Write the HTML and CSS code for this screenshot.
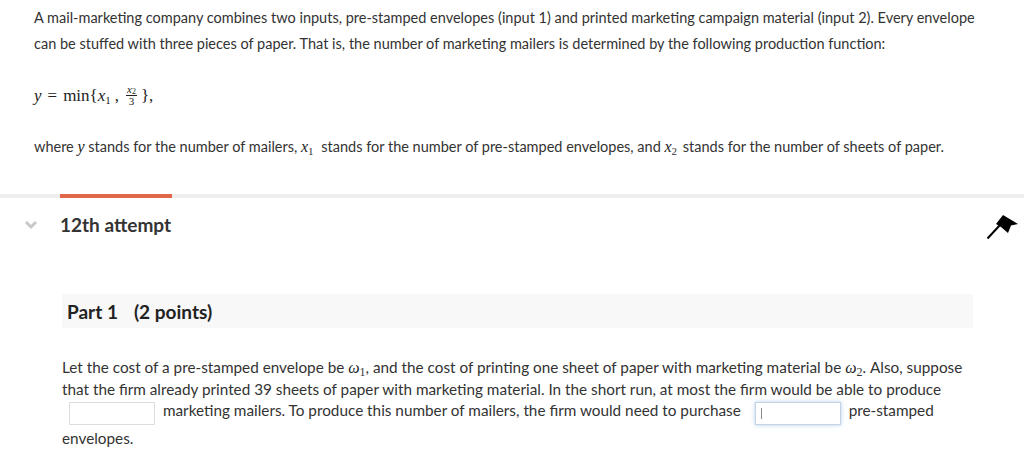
FILE: index.html
```html
<!DOCTYPE html>
<html>
<head>
<meta charset="utf-8">
<link rel="stylesheet" href="styles.css">
</head>
<body>
<div class="intro">
  <p class="p1">A mail-marketing company combines two inputs, pre-stamped envelopes (input 1) and printed marketing campaign material (input 2). Every envelope can be stuffed with three pieces of paper. That is, the number of marketing mailers is determined by the following production function:</p>
  <p class="formula"><span class="m">y</span><span class="eq">=</span><span class="mr">min{</span><span class="m">x</span><sub class="sb">1</sub><span class="mr">,</span><span class="frac"><span class="num"><span class="m">x</span><sub>2</sub></span><span class="den">3</span></span><span class="mr">},</span></p>
  <p class="p2">where <span class="m">y</span> stands for the number of mailers, <span class="m">x</span><sub class="sb">1</sub> stands for the number of pre-stamped envelopes, and <span class="m">x</span><sub class="sb2">2</sub> stands for the number of sheets of paper.</p>
</div>
<div class="tabbar"><div class="tab"></div></div>
<div class="attempt">
  <svg class="chev" width="14" height="10" viewBox="0 0 14 10"><path d="M2 2 L7 7 L12 2" fill="none" stroke="#c8c8c8" stroke-width="3"/></svg>
  <h2 class="title">12th attempt</h2>
  <svg class="flag" width="34" height="28" viewBox="0 0 34 28"><path d="M1.5 26.5 L14 13" stroke="#000" stroke-width="2" fill="none"/><path d="M10 12 L17 3 L32 12 L25 13.5 L22 21 L15 15 Z" fill="#000"/></svg>
</div>
<div class="part">
  <div class="parthead"><span class="pn">Part 1</span><span class="pp">(2 points)</span></div>
  <p class="q">Let the cost of a pre-stamped envelope be <span class="m">ω</span><sub class="sw">1</sub>, and the cost of printing one sheet of paper with marketing material be <span class="m">ω</span><sub class="sw">2</sub>. Also, suppose that the firm already printed 39 sheets of paper with marketing material. In the short run, at most the firm would be able to produce <span class="box"></span> marketing mailers. To produce this number of mailers, the firm would need to purchase <span class="box focus"><span class="caret"></span></span> pre-stamped envelopes.</p>
</div>
</body>
</html>
```
FILE: styles.css
```css
html, body { margin: 0; padding: 0; background: #fff; }
body { font-family: Lato, "Open Sans", sans-serif; color: #333; }
.intro { padding: 0 40px 0 34px; }
.p1 { margin: 5px 0 0; font-size: 14.5px; line-height: 26px; }
.formula { margin: 26px 0 0; font-family: "Liberation Serif", "DejaVu Serif", serif; font-size: 17px; line-height: 26px; color: #222; }
.m { font-family: "Liberation Serif", "DejaVu Serif", serif; font-style: italic; font-size: 17px; color: #222; }
.mr { font-family: "Liberation Serif", serif; }
.eq { margin: 0 6px 0 6px; }
sub { font-family: "Liberation Serif", serif; font-size: 11px; line-height: 0; vertical-align: -3px; }
.sb { margin-right: 4px; }
.sb2 { margin-right: 2px; }
.frac { display: inline-flex; flex-direction: column; align-items: center; vertical-align: middle; font-size: 10px; line-height: 10px; margin: 0 4px 0 7px; position: relative; top: -2px; }
.frac .num { border-bottom: 1px solid #222; padding: 0 1px; }
.frac .num .m { font-size: 11px; }
.frac sub { font-size: 8px; vertical-align: -1px; }
.frac .den { font-size: 11px; }
.p2 { margin: 25px 0 0; font-size: 14.5px; line-height: 26px; }
.p2 .m { font-size: 16px; }
.tabbar { margin-top: 34px; height: 4px; background: #eeeeee; padding-left: 60px; }
.tab { width: 112px; height: 4px; background: #e0674a; }
.attempt { display: flex; align-items: center; height: 52px; padding: 0 4px 0 24px; margin-top: 0; }
.chev { margin-right: 22px; margin-top: 2px; }
.title { margin: 0; font-size: 19px; font-weight: 700; color: #333; flex: 1; }
.flag { margin-top: 4px; }
.part { margin: 44px 51px 0 62px; }
.parthead { background: #f8f8f8; height: 34px; display: flex; align-items: center; padding-left: 5px; font-size: 19px; font-weight: 700; color: #222; }
.pp { margin-left: 16px; }
.q { margin: 29px 0 0; font-size: 15.3px; line-height: 21.5px; color: #333; }
.q .m { font-size: 16px; }
.sw { font-size: 12px; }
.box { display: inline-block; width: 84px; height: 21px; border: 1px solid #ddd; vertical-align: -12px; margin: 0 4px 3px 7px; position: relative; background: #fff; }
.box.focus { border-color: #c5d3e3; box-shadow: 0 0 4px rgba(102, 160, 230, 0.5); margin-left: 10px; margin-right: 4px; }
.caret { position: absolute; left: 5px; top: 5px; width: 1px; height: 11px; background: #888; }
```
